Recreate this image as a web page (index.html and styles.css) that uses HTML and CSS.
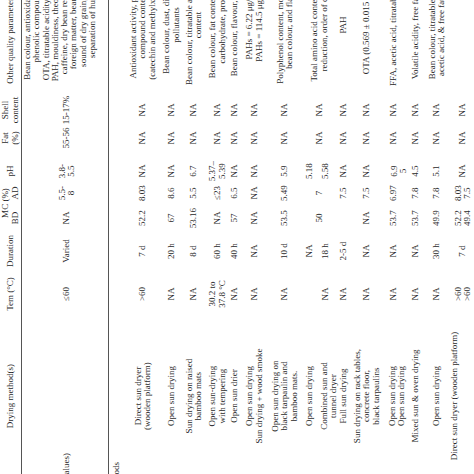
FILE: index.html
```html
<!DOCTYPE html>
<html>
<head>
<meta charset="utf-8">
<link rel="stylesheet" href="styles.css">
</head>
<body>
<div class="page">
<div class="tbl">
  <div class="row hd">
    <div class="c k"></div>
    <div class="c m">Drying method(s)</div>
    <div class="c">Tem (°C)</div>
    <div class="c">Duration</div>
    <div class="c mc"><span>MC (%)</span><div class="sub"><span>BD</span><span>AD</span></div></div>
    <div class="c">pH</div>
    <div class="c f">Fat<br>(%)</div>
    <div class="c">Shell<br>content</div>
    <div class="c">Other quality parameters studied</div>
  </div>
  <div class="rule"></div>
  <div class="row r1">
    <div class="c k">(values)</div>
    <div class="c m"></div>
    <div class="c">≤60</div>
    <div class="c">Varied</div>
    <div class="c">NA</div>
    <div class="c">5.5-<br>8</div>
    <div class="c">3.8-<br>5.5</div>
    <div class="c f">55-56</div>
    <div class="c">15-17%</div>
    <div class="c o1">Bean colour, antioxidants, pH,<br>phenolic compounds<br>OTA, titratable acidity, cut test<br>PAH, mouldiness, theobromine<br>caffeine, dry bean recovery<br>foreign matter, bean size<br>sound of dry grain, and<br>separation of husk</div>
  </div>
  <div class="rule"></div>
  <div class="row">
    <div class="c k sec">Sun drying methods</div>
    <div class="fill"></div>
  </div>
  <div class="row">
    <div class="c k"></div>
    <div class="c m">Direct sun dryer<br>(wooden platform)</div>
    <div class="c">&gt;60</div>
    <div class="c">7 d</div>
    <div class="c">52.2</div>
    <div class="c">8.03</div>
    <div class="c">NA</div>
    <div class="c f">NA</div>
    <div class="c">NA</div>
    <div class="c">Antioxidant activity, phenolic<br>compound content<br>(catechin and methylxanthine)</div>
  </div>
  <div class="row">
    <div class="c k"></div>
    <div class="c m">Open sun drying</div>
    <div class="c">NA</div>
    <div class="c">20 h</div>
    <div class="c">67</div>
    <div class="c">8.6</div>
    <div class="c">NA</div>
    <div class="c f">NA</div>
    <div class="c">NA</div>
    <div class="c">Bean colour, dust, dirt, and<br>pollutants</div>
  </div>
  <div class="row">
    <div class="c k"></div>
    <div class="c m">Sun drying on raised<br>bamboo mats</div>
    <div class="c">NA</div>
    <div class="c">8 d</div>
    <div class="c">53.16</div>
    <div class="c">5.5</div>
    <div class="c">6.7</div>
    <div class="c f">NA</div>
    <div class="c">NA</div>
    <div class="c">Bean colour, titratable acidity, fat<br>content</div>
  </div>
  <div class="row">
    <div class="c k"></div>
    <div class="c m">Open sun-drying<br>with tempering</div>
    <div class="c">30.2 to<br>37.8 °C</div>
    <div class="c">60 h</div>
    <div class="c">NA</div>
    <div class="c">≤23</div>
    <div class="c">5.37–<br>5.39</div>
    <div class="c f">NA</div>
    <div class="c">NA</div>
    <div class="c">Bean colour, fat content, total<br>carbohydrate, protein</div>
  </div>
  <div class="row">
    <div class="c k"></div>
    <div class="c m">Open sun drier</div>
    <div class="c">NA</div>
    <div class="c">40 h</div>
    <div class="c">57</div>
    <div class="c">6.5</div>
    <div class="c">NA</div>
    <div class="c f">NA</div>
    <div class="c">NA</div>
    <div class="c">Bean colour, flavour, acidity</div>
  </div>
  <div class="row">
    <div class="c k"></div>
    <div class="c m">Open sun drying<br>Sun drying + wood smoke</div>
    <div class="c">NA</div>
    <div class="c">NA</div>
    <div class="c">NA</div>
    <div class="c">NA</div>
    <div class="c">NA</div>
    <div class="c f">NA</div>
    <div class="c">NA</div>
    <div class="c">PAHs = 6.22 μg/kg<br>PAHs = 114.5 μg/kg</div>
  </div>
  <div class="row">
    <div class="c k"></div>
    <div class="c m">Open sun drying on<br>black tarpaulin and<br>bamboo mats.</div>
    <div class="c">NA</div>
    <div class="c">10 d</div>
    <div class="c">53.5</div>
    <div class="c">5.49</div>
    <div class="c">5.9</div>
    <div class="c f">NA</div>
    <div class="c">NA</div>
    <div class="c">Polyphenol content, mouldiness,<br>bean colour, and flavour</div>
  </div>
  <div class="row">
    <div class="c k"></div>
    <div class="c m">Open sun drying</div>
    <div class="c"></div>
    <div class="c">NA</div>
    <div class="c span2">50</div>
    <div class="c span2">7</div>
    <div class="c">5.18</div>
    <div class="c f span2">NA</div>
    <div class="c span2">NA</div>
    <div class="c span2">Total amino acid content, sugar<br>reduction, order of drying</div>
  </div>
  <div class="row">
    <div class="c k"></div>
    <div class="c m top p4">Combined sun and<br>tunnel dryer</div>
    <div class="c">NA</div>
    <div class="c">18 h</div>
    <div class="c">5.58</div>
  </div>
  <div class="row">
    <div class="c k"></div>
    <div class="c m">Full sun drying</div>
    <div class="c">NA</div>
    <div class="c">2-5 d</div>
    <div class="c"></div>
    <div class="c">7.5</div>
    <div class="c">NA</div>
    <div class="c f">NA</div>
    <div class="c">NA</div>
    <div class="c">PAH</div>
  </div>
  <div class="row">
    <div class="c k"></div>
    <div class="c m">Sun drying on rack tables,<br>concrete floor,<br>black tarpaulins</div>
    <div class="c">NA</div>
    <div class="c">NA</div>
    <div class="c">NA</div>
    <div class="c">7.5</div>
    <div class="c">NA</div>
    <div class="c f">NA</div>
    <div class="c">NA</div>
    <div class="c">OTA (0.569 ± 0.015 μg/kg)</div>
  </div>
  <div class="row">
    <div class="c k"></div>
    <div class="c m top p6">Open sun drying<br>Open sun drying</div>
    <div class="c">NA</div>
    <div class="c">NA</div>
    <div class="c">53.7</div>
    <div class="c">6.97</div>
    <div class="c top p8">6.9<br>5</div>
    <div class="c f">NA</div>
    <div class="c">NA</div>
    <div class="c">FFA, acetic acid, titratable acidity</div>
  </div>
  <div class="row">
    <div class="c k"></div>
    <div class="c m">Mixed sun &amp; oven drying</div>
    <div class="c">NA</div>
    <div class="c">NA</div>
    <div class="c">53.7</div>
    <div class="c">7.8</div>
    <div class="c">4.5</div>
    <div class="c f">NA</div>
    <div class="c">NA</div>
    <div class="c">Volatile acidity, free fatty acid</div>
  </div>
  <div class="row">
    <div class="c k"></div>
    <div class="c m">Open sun drying</div>
    <div class="c">NA</div>
    <div class="c">30 h</div>
    <div class="c">49.9</div>
    <div class="c">7.8</div>
    <div class="c">5.1</div>
    <div class="c f">NA</div>
    <div class="c">NA</div>
    <div class="c">Bean colour, titratable acidity,<br>acetic acid, &amp; free fatty acid</div>
  </div>
  <div class="row">
    <div class="c k"></div>
    <div class="c m top p2">Direct sun dryer (wooden platform)</div>
    <div class="c">&gt;60<br>&gt;60</div>
    <div class="c">7 d</div>
    <div class="c">52.2<br>49.4</div>
    <div class="c">8.03<br>7.5</div>
    <div class="c">NA</div>
    <div class="c f">NA</div>
    <div class="c">NA</div>
    <div class="c"></div>
  </div>
</div>
</div>
</body>
</html>
```
FILE: styles.css
```css
html, body {
  margin: 0;
  padding: 0;
  background: #fff;
  overflow: hidden;
}

.page {
  width: 474px;
  height: 474px;
  overflow: hidden;
}

.tbl {
  display: grid;
  width: 616px;
  grid-template-columns: 120px 136px 40px 46px 20px 30px 14px 40px 28px 142px;
  grid-template-rows: 21px 1px 86px 1px 15px 38px 19px 26px 21px 14px 25px 36px 13px 20px 16px 30px 24px 20px 22px 30px;
  transform-origin: 0 0;
  transform: translate(0, 570px) rotate(-90deg);
  font-family: "Liberation Serif", "Times New Roman", serif;
  font-size: 9px;
  line-height: 9.3px;
  color: #2a2a2a;
}

.row {
  display: contents;
}

.c {
  display: flex;
  align-items: center;
  justify-content: center;
  text-align: center;
  white-space: nowrap;
  min-width: 0;
}

.k {
  justify-content: flex-end;
  padding-right: 3px;
}

.sec {
  padding-right: 12px;
}

.fill {
  grid-column: span 9;
}

.m {
  padding-right: 28px;
}

.f {
  padding-left: 12px;
}

.mc {
  grid-column: span 2;
  flex-direction: column;
}

.sub {
  display: grid;
  grid-template-columns: 20px 30px;
  text-align: center;
}

.rule {
  grid-column: 1 / -1;
  background: #555;
}

.r1 > .c {
  padding-top: 4px;
}

.r1 > .o1 {
  align-items: flex-start;
  padding-top: 1px;
}

.span2 {
  grid-row: span 2;
}

.top {
  align-items: flex-start;
}

.p2 { padding-top: 2px; }
.p4 { padding-top: 4px; }
.p6 { padding-top: 6px; }
.p8 { padding-top: 8px; }
```
